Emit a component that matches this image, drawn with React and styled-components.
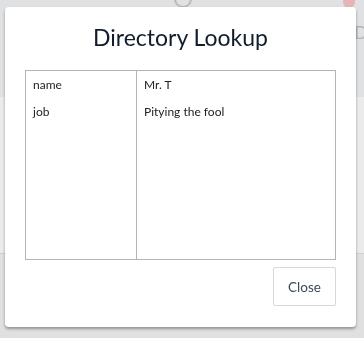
import React from 'react';
import styled, { createGlobalStyle } from 'styled-components';

const rows = [
  { key: 'name', value: 'Mr. T' },
  { key: 'job', value: 'Pitying the fool' },
];

const App = () => {
  return (
    <>
      <Global />
      <Page>
        <Header>
          <Spinner />
          <Avatar />
          <HeaderText>Do</HeaderText>
        </Header>
        <Content />
        <Footer />
      </Page>
      <Overlay>
        <Modal role="dialog">
          <Title>Directory Lookup</Title>
          <Table>
            <Column $first>
              {rows.map((r) => (
                <Cell key={r.key}>{r.key}</Cell>
              ))}
            </Column>
            <Column>
              {rows.map((r) => (
                <Cell key={r.key}>{r.value}</Cell>
              ))}
            </Column>
          </Table>
          <Actions>
            <Button type="button">Close</Button>
          </Actions>
        </Modal>
      </Overlay>
    </>
  );
};

export default App;

const Global = createGlobalStyle`
  html, body {
    margin: 0;
    padding: 0;
    width: 364px;
    height: 338px;
    overflow: hidden;
    font-family: Lato, "Open Sans", sans-serif;
  }
`;

const Page = styled.div`
  width: 364px;
  height: 338px;
  display: flex;
  flex-direction: column;
  background: #e0e0e0;
`;

const Header = styled.div`
  position: relative;
  height: 97px;
  background: #e0e1e3;
`;

const Spinner = styled.div`
  position: absolute;
  left: 174px;
  top: -10px;
  width: 14px;
  height: 14px;
  border: 2px solid #b9babc;
  border-radius: 50%;
`;

const Avatar = styled.div`
  position: absolute;
  left: 343px;
  top: -4px;
  width: 12px;
  height: 12px;
  border-radius: 50%;
  background: #e7b4b6;
`;

const HeaderText = styled.span`
  position: absolute;
  left: 354px;
  top: 21px;
  font-size: 18px;
  color: #b5b6b8;
`;

const Content = styled.div`
  height: 156px;
  background: #ebebeb;
  border-bottom: 1px solid #cfcfcf;
`;

const Footer = styled.div`
  flex: 1;
  background: #e0e0e0;
`;

const Overlay = styled.div`
  position: fixed;
  inset: 0;
  padding: 7px 0 0 5px;
`;

const Modal = styled.div`
  width: 351px;
  height: 320px;
  box-sizing: border-box;
  background: #ffffff;
  border-radius: 4px;
  box-shadow: 0 2px 3px rgba(0, 0, 0, 0.35);
  padding: 15px 20px 21px;
  display: flex;
  flex-direction: column;
`;

const Title = styled.h2`
  margin: 0 0 18px;
  font-weight: 400;
  font-size: 23px;
  line-height: 30px;
  text-align: center;
  color: #111d2e;
`;

const Table = styled.div`
  display: grid;
  grid-template-columns: 111px 1fr;
  height: 190px;
  box-sizing: border-box;
  border: 1px solid #b4b4b4;
`;

const Column = styled.div`
  display: flex;
  flex-direction: column;
  border-right: ${(p) => (p.$first ? '1px solid #b4b4b4' : 'none')};
`;

const Cell = styled.div`
  padding: 6px 7px 5px;
  font-size: 12px;
  line-height: 16px;
  color: #222;
`;

const Actions = styled.div`
  display: flex;
  justify-content: flex-end;
  margin-top: 7px;
`;

const Button = styled.button`
  width: 63px;
  height: 39px;
  background: #fff;
  border: 1px solid #d3d9e2;
  border-radius: 2px;
  font-family: Lato, "Open Sans", sans-serif;
  font-size: 13.5px;
  color: #3d4a59;
  cursor: pointer;
`;
